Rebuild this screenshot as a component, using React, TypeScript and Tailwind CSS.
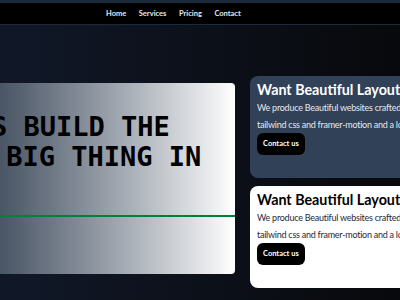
import React from 'react';

const CARDS = [
  { tone: 'bg-slate-700 text-white', body: 'text-gray-200' },
  { tone: 'bg-white text-black', body: 'text-gray-800' },
];

export default function App() {
  return (
    <div className="w-[400px] h-[300px] overflow-hidden bg-gradient-to-r from-gray-900 to-[#08090c] font-['Lato',sans-serif]">
      <div className="h-[3px] bg-gray-800" />

      {/* Nav */}
      <nav className="h-[22px] bg-black border-b border-gray-800 flex items-center gap-[12.5px] pl-[106px] text-[7.5px] font-bold text-gray-200">
        <a>Home</a>
        <a>Services</a>
        <a>Pricing</a>
        <a>Contact</a>
      </nav>

      <div className="flex items-start gap-[15px] mt-[51px]">
        {/* Hero card */}
        <div className="mt-[7px] w-[235px] h-[191px] shrink-0 rounded-r bg-gradient-to-r from-gray-600 to-white overflow-hidden flex flex-col">
          <div className="pt-[29px] font-['DejaVu_Sans_Mono',monospace] font-bold text-[27px] leading-[30px] text-black whitespace-nowrap">
            <div className="ml-[-74px]">LET'S BUILD THE</div>
            <div className="ml-[-75px]">NEXT BIG THING IN</div>
          </div>
          <div className="mt-auto mb-[57px] h-[2px] bg-green-700" />
        </div>

        {/* Feature cards */}
        <div className="flex flex-col gap-[8px] shrink-0">
          {CARDS.map((c, i) => (
            <div key={i} className={`w-[300px] h-[102px] rounded-lg px-[7px] pt-[4px] ${c.tone}`}>
              <h2 className="text-[14.3px] font-bold leading-[20px]">Want Beautiful Layouts?</h2>
              <p className={`mt-[-1px] text-[9px] tracking-[-0.25px] leading-[17px] ${c.body}`}>
                We produce Beautiful websites crafted with
                <br />
                tailwind css and framer-motion and a lot of love
              </p>
              <button className="block h-[22px] px-[6px] rounded-md bg-black text-white text-[7.5px] font-bold">
                Contact us
              </button>
            </div>
          ))}
        </div>
      </div>
    </div>
  );
}
